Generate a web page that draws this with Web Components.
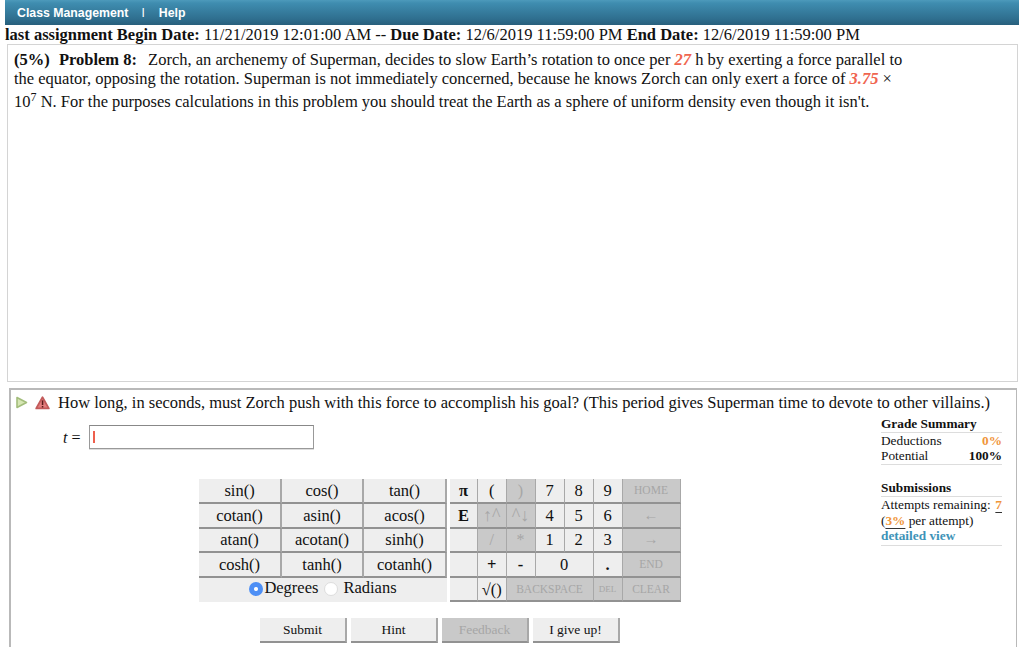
<!DOCTYPE html>
<html lang="en">
<head>
<meta charset="utf-8">
<title>Class Management</title>
<style>
html, body { margin: 0; height: 647px; overflow: hidden; background: #fff; }
body { font: 16.5px/19px "Liberation Serif", "Times New Roman", serif; color: #111; }
</style>
</head>
<body>
<top-nav><a>Class Management</a><i>I</i><a>Help</a></top-nav>
<date-line></date-line>
<problem-box></problem-box>
<question-box>
  <answer-row slot="answer"></answer-row>
  <calc-pad slot="answer"></calc-pad>
  <action-row slot="answer"></action-row>
  <grade-panel slot="side"></grade-panel>
</question-box>

<script>
// every element is the same thing: a template cloned in an open shadow root
const make = (name, html) => {
  const tmpl = document.createElement("template");
  tmpl.innerHTML = html;
  customElements.define(name, class extends HTMLElement {
    constructor() {
      super();
      this.attachShadow({ mode: "open" }).appendChild(tmpl.content.cloneNode(true));
    }
  });
};

make("top-nav", `
<style>
:host {
  display: flex; align-items: center; height: 25px; margin: 0 5px; padding: 1px 0 0 12px; box-sizing: border-box;
  background: linear-gradient(#4d9abb 0, #3f8db0 12%, #2f6f8f 75%, #285f7c 100%);
  color: #fff; font: bold 12.3px "Liberation Sans", Arial, sans-serif;
}
::slotted(i) { font-style: normal; font-weight: normal; margin: 0 14px 0 13px; font-size: 12px; }
</style>
<slot></slot>`);

make("date-line", `
<style>
:host { display: block; height: 19px; margin-left: 5px; white-space: nowrap; line-height: 19px; }
b { font-weight: bold; }
</style>
<b>last assignment Begin Date:</b> 11/21/2019 12:01:00 AM -- <b>Due Date:</b> 12/6/2019 11:59:00 PM <b>End Date:</b> 12/6/2019 11:59:00 PM`);

make("problem-box", `
<style>
:host {
  display: block; box-sizing: border-box; height: 338px; margin: 0 6px 0 7px; padding: 5px 6px;
  border: 1px solid #d4d4d4; line-height: 19px;
}
div { white-space: nowrap; }
em { color: #f0654f; font-weight: bold; }
sup { font-size: 12px; line-height: 0; }
.sp { margin-right: 5px; }
.l3 { margin-top: 4px; }
</style>
<div><b class="sp">(5%)</b> <b class="sp">Problem 8:</b> <span style="margin-left:2px">Zorch, an archenemy of Superman, decides to slow Earth’s rotation to once per</span> <em>27</em> h by exerting a force parallel to</div>
<div>the equator, opposing the rotation. Superman is not immediately concerned, because he knows Zorch can only exert a force of <em>3.75</em> ×</div>
<div class="l3">10<sup>7</sup> N. For the purposes calculations in this problem you should treat the Earth as a sphere of uniform density even though it isn't.</div>`);

make("question-box", `
<style>
:host { display: block; margin: 6px 7px 0 9px; border: 2px solid #b9b9b9; border-bottom: 0; border-right-width: 1px; height: 259px; box-sizing: border-box; }
.head { display: flex; align-items: center; height: 24px; padding: 1px 0 0 4px; box-sizing: border-box; }
.head svg { flex: none; }
.head span { margin-left: 8px; white-space: nowrap; }
.play { margin-right: 7px; }
.body { display: flex; }
.left { width: 870px; flex: none; }
</style>
<div class="head">
  <svg class="play" width="13" height="13" viewBox="0 0 13 13"><path d="M2 1.5 11.5 6.5 2 11.5Z" fill="#d6e6b4" stroke="#a3bd7c" stroke-width="1.6" stroke-linejoin="round"/></svg>
  <svg width="15" height="14" viewBox="0 0 15 14"><path d="M7.5 1.2 13.8 12.4H1.2Z" fill="#e27d7d" stroke="#c25a5a" stroke-width="1.8" stroke-linejoin="round"/><rect x="6.8" y="4.4" width="1.5" height="4.6" fill="#5a1a1a"/><rect x="6.8" y="10" width="1.5" height="1.5" fill="#5a1a1a"/></svg>
  <span>How long, in seconds, must Zorch push with this force to accomplish his goal? (This period gives Superman time to devote to other villains.)</span>
</div>
<div class="body">
  <div class="left"><slot name="answer"></slot></div>
  <slot name="side"></slot>
</div>`);

make("answer-row", `
<style>
:host { display: flex; align-items: center; height: 24px; margin: 11px 0 0 52px; font-size: 16px; }
.eq { width: 26px; white-space: nowrap; }
.field { width: 225px; height: 24px; box-sizing: border-box; border: 1px solid #999; border-top-color: #888; box-shadow: 0 1px 0 #ddd; display: flex; align-items: center; padding-left: 3px; }
.caret { width: 2px; height: 12px; background: #ee5f4d; }
</style>
<span class="eq"><i>t</i> =</span>
<div class="field"><div class="caret"></div></div>`);

make("calc-key", `
<style>
:host {
  display: flex; align-items: center; justify-content: center; box-sizing: border-box; min-width: 0;
  background: #eee; border-right: var(--key-edge, 2px) solid #a8a8a8; border-bottom: 2px solid #929292;
  font-size: var(--key-size, 16.5px); white-space: nowrap; overflow: hidden;
}
:host([off]) { background: #c9c9c9; color: #a6a6a6; font-size: 11.5px; }
:host([small]) { font-size: 9px; }
:host([bold]) { font-weight: bold; }
</style>
<slot></slot>`);

make("calc-pad", `
<style>
:host { display: flex; gap: 3px; height: 123px; margin: 30px 0 0 188px; }
.fn { display: grid; grid-template-columns: 83px 82px 83px; grid-template-rows: repeat(4, 24.75px) 24px; width: 248px; }
.degrees { grid-column: 1 / -1; background: #eee; display: flex; align-items: flex-start; justify-content: center; }
.radio { width: 14px; height: 14px; border-radius: 50%; margin: 4px 1px 0 0; box-sizing: border-box; border: 1px solid #ddd; background: #fff; }
.radio.on { border: 0; background: radial-gradient(circle, #fff 0 1.5px, #4d8ff5 2.5px); }
.num { display: grid; grid-template-columns: 28px 28.5px 29px 29px 29px 29px 58px; grid-template-rows: repeat(4, 24.75px) 24px; width: 230.5px; --key-edge: 1px; }
.arrow { font-size: 15px; }
.updown { font-size: 18px; }
</style>
<div class="fn">
  <calc-key>sin()</calc-key><calc-key>cos()</calc-key><calc-key>tan()</calc-key>
  <calc-key>cotan()</calc-key><calc-key>asin()</calc-key><calc-key>acos()</calc-key>
  <calc-key>atan()</calc-key><calc-key>acotan()</calc-key><calc-key>sinh()</calc-key>
  <calc-key>cosh()</calc-key><calc-key>tanh()</calc-key><calc-key>cotanh()</calc-key>
  <div class="degrees"><span class="radio on"></span>Degrees<span style="width:6px"></span><span class="radio"></span><span style="width:4px"></span>Radians</div>
</div>
<div class="num">
  <calc-key bold>π</calc-key><calc-key>(</calc-key><calc-key off style="font-size:16px">)</calc-key><calc-key>7</calc-key><calc-key>8</calc-key><calc-key>9</calc-key><calc-key off>HOME</calc-key>
  <calc-key bold>E</calc-key><calc-key off class="updown">↑^</calc-key><calc-key off class="updown">^↓</calc-key><calc-key>4</calc-key><calc-key>5</calc-key><calc-key>6</calc-key><calc-key off class="arrow">←</calc-key>
  <calc-key></calc-key><calc-key off style="font-size:16px">/</calc-key><calc-key off style="font-size:16px">*</calc-key><calc-key>1</calc-key><calc-key>2</calc-key><calc-key>3</calc-key><calc-key off class="arrow">→</calc-key>
  <calc-key></calc-key><calc-key bold>+</calc-key><calc-key bold>-</calc-key><calc-key style="grid-column: span 2">0</calc-key><calc-key bold>.</calc-key><calc-key off>END</calc-key>
  <calc-key></calc-key><calc-key>√()</calc-key><calc-key off style="grid-column: span 3">BACKSPACE</calc-key><calc-key off small>DEL</calc-key><calc-key off>CLEAR</calc-key>
</div>`);

make("action-row", `
<style>
:host { display: flex; gap: 4px; margin: 16px 0 0 249px; }
calc-key { width: 87px; height: 25px; --key-size: 13.5px; }
calc-key[off] { font-size: 13.5px; }
</style>
<calc-key>Submit</calc-key><calc-key>Hint</calc-key><calc-key off>Feedback</calc-key><calc-key>I give up!</calc-key>`);

make("grade-panel", `
<style>
:host { display: block; width: 121px; margin-top: 3px; font-size: 13.3px; line-height: 15px; }
h4 { margin: 0; font-size: 13.3px; line-height: 14px; border-bottom: 1px solid #ddd; padding-bottom: 1px; }
.row { display: flex; justify-content: space-between; }
.sum { border-bottom: 1px solid #ddd; padding: 0 0 1px; margin-bottom: 16px; }
.or { color: #f0953a; font-weight: bold; }
u { text-decoration-color: #333; text-underline-offset: 3px; }
.link { color: #3d93b8; font-weight: bold; display: block; }
.sub { border-bottom: 1px solid #ddd; padding-bottom: 1px; line-height: 15.5px; }
</style>
<h4>Grade Summary</h4>
<div class="sum">
  <div class="row"><span>Deductions</span><span class="or">0%</span></div>
  <div class="row"><span>Potential</span><b>100%</b></div>
</div>
<h4>Submissions</h4>
<div class="sub">
  <div class="row"><span>Attempts remaining:</span><u class="or">7</u></div>
  <div>(<u class="or">3%</u> per attempt)</div>
  <a class="link">detailed view</a>
</div>`);
</script>
</body>
</html>
